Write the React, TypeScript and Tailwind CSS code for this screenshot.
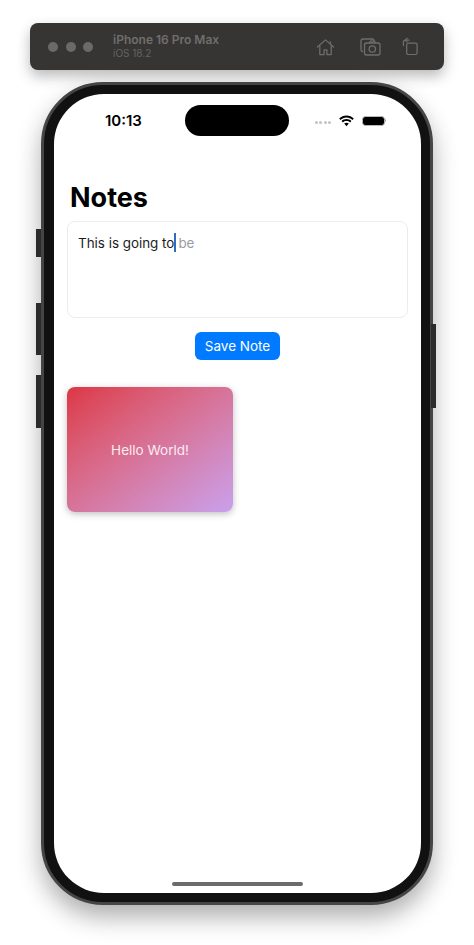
const font = { sans: "font-['Inter','Liberation_Sans',sans-serif]" };

function ToolbarIcons() {
  return (
    <div className="flex items-center text-[#6f6e6c]">
      <svg width="19" height="18" viewBox="0 0 20 18" fill="none" stroke="currentColor" strokeWidth="1.3" className="mr-[25px]">
        <path d="M1.500 9 10 1.500 18.500 9" strokeLinecap="round" strokeLinejoin="round" />
        <path d="M15 3v3" />
        <path d="M4 7.500V17h4.500v-5h3v5H16V7.500" strokeLinejoin="round" />
      </svg>
      <svg width="21" height="18" viewBox="0 0 21 18" fill="none" stroke="currentColor" strokeWidth="1.3" className="mr-[21px]">
        <path d="M3 13.500c-1.200 0-2-.8-2-2V3c0-1.200.8-2 2-2h9c1.200 0 2 .8 2 2" />
        <rect x="4.500" y="5" width="15.500" height="12" rx="2" />
        <path d="M9.500 5l1-1.800h4l1 1.800" />
        <circle cx="12.300" cy="11" r="3.200" />
      </svg>
      <svg width="16" height="19" viewBox="0 0 17 19" fill="none" stroke="currentColor" strokeWidth="1.3">
        <rect x="5" y="6" width="11" height="12" rx="1.500" />
        <path d="M1.500 9V5c0-1.500.8-2.300 2.300-2.300H8" />
        <path d="M5.500.8 3.300 2.700l2.200 1.900" strokeLinecap="round" strokeLinejoin="round" />
      </svg>
    </div>
  );
}

function StatusBar() {
  return (
    <div className="mt-[11px] flex h-[31px] items-center pl-[51px] pr-[35px]">
      <span className="mt-[1px] w-[80px] text-[15px] font-semibold text-black">10:13</span>
      <div className="h-[31px] w-[104px] rounded-full bg-black" />
      <div className="ml-auto flex items-center">
        <div className="mr-[7px] mt-[3px] flex gap-[1.500px]">
          <span className="h-[3px] w-[3px] rounded-full bg-[#c4c4c4]" />
          <span className="h-[3px] w-[3px] rounded-full bg-[#c4c4c4]" />
          <span className="h-[3px] w-[3px] rounded-full bg-[#c4c4c4]" />
          <span className="h-[3px] w-[3px] rounded-full bg-[#c4c4c4]" />
        </div>
        <svg width="17" height="12" viewBox="0 0 16 12" fill="black" className="mr-[7px]">
          <path d="M8 2.600c2.300 0 4.400.9 6 2.400l1.300-1.400C13.300 1.700 10.800.5 8 .5S2.700 1.700.7 3.600L2 5c1.600-1.500 3.700-2.400 6-2.400z" />
          <path d="M8 6c1.400 0 2.600.5 3.600 1.400l1.300-1.400C11.600 4.800 9.900 4.100 8 4.100S4.400 4.800 3.100 6l1.300 1.400C5.400 6.500 6.600 6 8 6z" />
          <path d="M8 7.700c-.9 0-1.700.3-2.300.9L8 11.200l2.300-2.600c-.6-.6-1.400-.9-2.300-.9z" />
        </svg>
        <div className="flex items-center">
          <div className="h-[10px] w-[23px] rounded-[3.500px] border border-[#b8b8b8] bg-black" />
          <div className="h-[3px] w-[1px] rounded-r-sm bg-[#a8a8a8]" />
        </div>
      </div>
    </div>
  );
}

function SideButton({ cls }: { cls: string }) {
  return <div className={`absolute w-[5px] bg-[#2b2b2b] ${cls}`} />;
}

export default function App() {
  return (
    <div className={`flex h-[945px] w-[474px] flex-col items-center overflow-hidden bg-white pt-[23px] ${font.sans}`}>
      {/* Simulator toolbar */}
      <div className="flex h-[47px] w-[414px] shrink-0 items-center rounded-lg bg-[#363534] pl-[18px] pr-[26px] shadow-[0_6px_14px_rgba(0,0,0,0.28)]">
        <div className="flex gap-[7.500px]">
          <span className="h-[10px] w-[10px] rounded-full bg-[#6b6a68]" />
          <span className="h-[10px] w-[10px] rounded-full bg-[#6b6a68]" />
          <span className="h-[10px] w-[10px] rounded-full bg-[#6b6a68]" />
        </div>
        <div className="ml-[20px] flex flex-col">
          <span className="text-[12px] leading-[14px] font-semibold text-[#6f6e6c]">iPhone 16 Pro Max</span>
          <span className="text-[10px] leading-[13px] text-[#64635f]">iOS 18.2</span>
        </div>
        <div className="ml-auto">
          <ToolbarIcons />
        </div>
      </div>

      {/* Phone */}
      <div className="relative mt-[12px] h-[823px] w-[392px] shrink-0 rounded-[62px] border-[3px] border-[#454545] bg-[#111] py-[9px] pl-[10px] pr-[9px] shadow-[0_12px_24px_rgba(0,0,0,0.32)]">
        <SideButton cls="-left-[8px] top-[144px] h-[28px]" />
        <SideButton cls="-left-[8px] top-[218px] h-[52px]" />
        <SideButton cls="-left-[8px] top-[290px] h-[53px]" />
        <SideButton cls="-right-[6px] top-[239px] h-[84px] w-[4px]" />

        <div className="flex h-full w-full flex-col overflow-hidden rounded-[50px] bg-white">
          <StatusBar />

          <div className="px-[13px]">
            <h1 className="mt-[44px] pl-[3px] text-[27px] leading-[36px] font-bold text-black">Notes</h1>

            <div className="mt-[5px] h-[97px] rounded-lg border border-[#ececec] px-[10px] py-[7px] text-[13.400px] leading-[24px] text-[#1c1c1e]">
              <span>This is going to</span>
              <span className="inline-block h-[19px] w-[2px] translate-y-[4px] bg-[#2a6fc4]" />
              <span className="ml-[2px] text-[#9a9aa2]">be</span>
            </div>

            <div className="mt-[14px] flex justify-center">
              <button className="h-[28px] w-[85px] rounded-md bg-[#007aff] text-[13.500px] text-white">Save Note</button>
            </div>

            <div className="mt-[27px] flex h-[125px] w-[166px] items-center justify-center rounded-lg bg-gradient-to-br from-[#dc3545] to-[#c9a0ec] pt-[1px] text-[13.500px] text-[#fbeaf2] shadow-[0_2px_7px_rgba(0,0,0,0.25)]">
              Hello World!
            </div>
          </div>

          <div className="mb-[7px] mt-auto h-[4px] w-[131px] self-center rounded-full bg-[#6b6b6b]" />
        </div>
      </div>
    </div>
  );
}
